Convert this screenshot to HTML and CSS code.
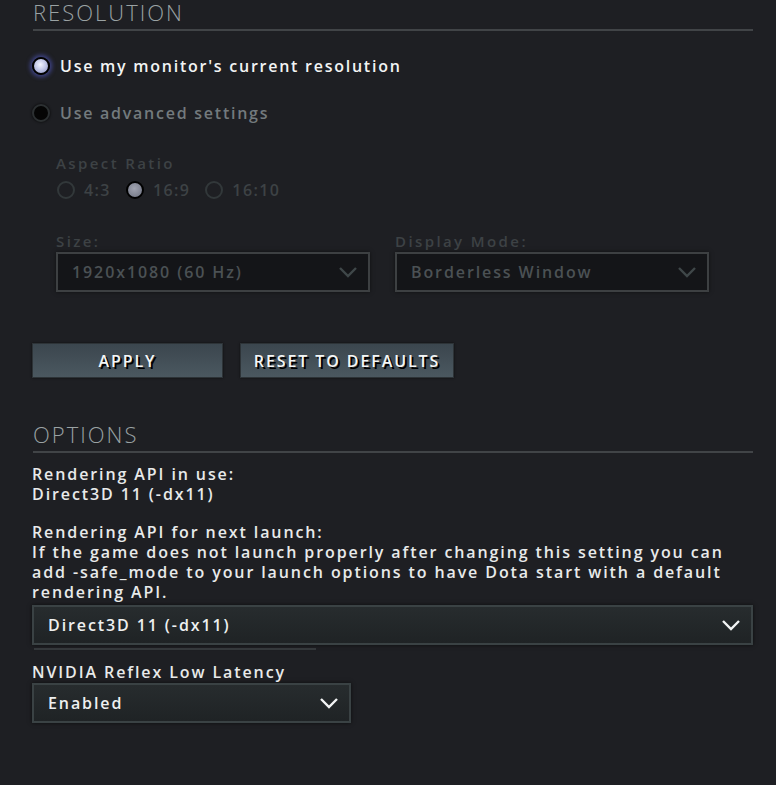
FILE: index.html
```html
<!DOCTYPE html>
<html>
<head>
<meta charset="utf-8">
<link rel="stylesheet" href="styles.css">
</head>
<body>
<div class="page">
  <section class="section">
    <h2 class="heading">RESOLUTION</h2>
    <div class="divider"></div>
    <label class="radio-row first">
      <span class="radio radio-on"></span>
      <span class="radio-label bright">Use my monitor's current resolution</span>
    </label>
    <label class="radio-row second">
      <span class="radio radio-off"></span>
      <span class="radio-label dim">Use advanced settings</span>
    </label>
    <div class="advanced">
      <div class="sub-label">Aspect Ratio</div>
      <div class="aspect-row">
        <span class="small-radio empty"></span><span class="aspect-label">4:3</span>
        <span class="small-radio filled"></span><span class="aspect-label">16:9</span>
        <span class="small-radio empty"></span><span class="aspect-label">16:10</span>
      </div>
      <div class="select-grid">
        <div class="field">
          <div class="sub-label">Size:</div>
          <div class="select disabled">
            <span>1920x1080 (60 Hz)</span>
            <svg class="chev" width="20" height="12" viewBox="0 0 20 12"><path d="M2 2 L10 10 L18 2" fill="none" stroke="currentColor" stroke-width="2.4"/></svg>
          </div>
        </div>
        <div class="field">
          <div class="sub-label">Display Mode:</div>
          <div class="select disabled">
            <span>Borderless Window</span>
            <svg class="chev" width="20" height="12" viewBox="0 0 20 12"><path d="M2 2 L10 10 L18 2" fill="none" stroke="currentColor" stroke-width="2.4"/></svg>
          </div>
        </div>
      </div>
    </div>
    <div class="buttons">
      <button class="btn apply">APPLY</button>
      <button class="btn reset">RESET TO DEFAULTS</button>
    </div>
  </section>

  <section class="section options">
    <h2 class="heading">OPTIONS</h2>
    <div class="divider"></div>
    <p class="text">Rendering API in use:<br>Direct3D 11 (-dx11)</p>
    <p class="text next">Rendering API for next launch:<br>If the game does not launch properly after changing this setting you can add -safe_mode to your launch options to have Dota start with a default rendering API.</p>
    <div class="select active wide">
      <span>Direct3D 11 (-dx11)</span>
      <svg class="chev" width="20" height="12" viewBox="0 0 20 12"><path d="M2 2 L10 10 L18 2" fill="none" stroke="currentColor" stroke-width="2.4"/></svg>
    </div>
    <div class="stub-line"></div>
    <p class="text reflex">NVIDIA Reflex Low Latency</p>
    <div class="select active narrow">
      <span>Enabled</span>
      <svg class="chev" width="20" height="12" viewBox="0 0 20 12"><path d="M2 2 L10 10 L18 2" fill="none" stroke="currentColor" stroke-width="2.4"/></svg>
    </div>
  </section>
</div>
</body>
</html>
```
FILE: styles.css
```css
html, body {
  margin: 0;
  padding: 0;
  background: #1e1f23;
  height: 785px;
  overflow: hidden;
}
body {
  font-family: "Open Sans", "Noto Sans", sans-serif;
  color: #e4e6e6;
}
.page {
  padding: 0 23px 0 32px;
}
.heading {
  margin: 0;
  font-weight: 300;
  font-size: 22px;
  line-height: 24px;
  letter-spacing: 2px;
  color: #9aa2a3;
  padding-left: 1px;
}
.divider {
  height: 2px;
  background: #414447;
  margin: 5px 0 0 1px;
}
.radio-row {
  display: flex;
  align-items: center;
  gap: 10px;
  height: 20px;
}
.radio-row.first {
  margin-top: 25px;
}
.radio-row.second {
  margin-top: 27px;
}
.radio {
  width: 14px;
  height: 14px;
  border-radius: 50%;
  border: 2px solid #000;
  flex: none;
}
.radio-on {
  background: radial-gradient(circle at 45% 40%, #f2f4ff 0%, #c4c9e8 45%, #8b92c4 100%);
  box-shadow: 0 0 4px 2px rgba(74, 80, 170, 0.75);
}
.radio-off {
  background: #050505;
  border-color: #2c3032;
  box-shadow: 0 0 2px 1px rgba(0,0,0,0.4);
}
.radio-label {
  font-size: 16px;
  line-height: 20px;
  letter-spacing: 1.75px;
}
.bright {
  color: #f2f4f4;
  font-weight: 600;
}
.dim {
  color: #737a7d;
  font-weight: 600;
}
.advanced {
  padding-left: 24px;
  margin-top: 31px;
}
.sub-label {
  font-size: 15px;
  line-height: 18px;
  letter-spacing: 2.4px;
  color: #3d4245;
  font-weight: 600;
}
.aspect-row {
  display: flex;
  align-items: center;
  margin-top: 7px;
  height: 22px;
  padding-left: 1px;
}
.small-radio {
  width: 18px;
  height: 18px;
  border-radius: 50%;
  flex: none;
  box-sizing: border-box;
}
.small-radio.empty {
  border: 2px solid #32383a;
}
.small-radio.filled {
  border: 2px solid #000;
  background: radial-gradient(circle at 45% 40%, #a0a3b0 0%, #6d7180 100%);
}
.aspect-label {
  font-size: 16px;
  letter-spacing: 1.4px;
  color: #3d4245;
  font-weight: 600;
  margin: 0 15px 0 9px;
}
.select-grid {
  display: grid;
  grid-template-columns: 314px 314px;
  column-gap: 25px;
  margin-top: 31px;
}
.select-grid .select {
  margin-top: 2px;
}
.select {
  box-sizing: border-box;
  height: 40px;
  border: 2px solid #3d4042;
  display: flex;
  align-items: center;
  justify-content: space-between;
  padding: 0 10px 0 14px;
  font-size: 16px;
  letter-spacing: 1.9px;
  font-weight: 600;
}
.select.disabled {
  background: #141518;
  color: #4b5154;
  box-shadow: 0 0 4px rgba(0,0,0,0.5);
}
.select.disabled .chev {
  color: #3f4749;
}
.select.active {
  background: linear-gradient(#272c2e, #1f2325);
  border-color: #3a4244;
  color: #eef0f0;
  box-shadow: 0 0 4px rgba(0,0,0,0.6);
}
.select.active .chev {
  color: #f2f4f4;
}
.buttons {
  display: flex;
  gap: 17px;
  margin-top: 51px;
}
.btn {
  height: 35px;
  border: 1px solid #2d3337;
  background: linear-gradient(#3b464e, #4b5860);
  color: #f4f6f6;
  font-family: inherit;
  font-weight: 600;
  font-size: 16px;
  letter-spacing: 1.9px;
  text-shadow: 2px 2px 0 #000;
  padding: 0;
  box-shadow: 0 0 2px rgba(0,0,0,0.6);
}
.btn.apply {
  width: 191px;
}
.btn.reset {
  width: 214px;
}
.options {
  margin-top: 44px;
}
.text {
  margin: 0;
  font-size: 16px;
  line-height: 20px;
  letter-spacing: 1.9px;
  font-weight: 600;
  color: #e8eaea;
}
.options .divider + .text {
  margin-top: 11px;
}
.text.next {
  margin-top: 18px;
}
.select.wide {
  width: 721px;
  margin-top: 3px;
}
.stub-line {
  width: 282px;
  height: 2px;
  background: #34383b;
  margin: 3px 0 0 2px;
}
.text.reflex {
  margin-top: 12px;
}
.select.narrow {
  width: 319px;
  margin-top: 1px;
}
```
